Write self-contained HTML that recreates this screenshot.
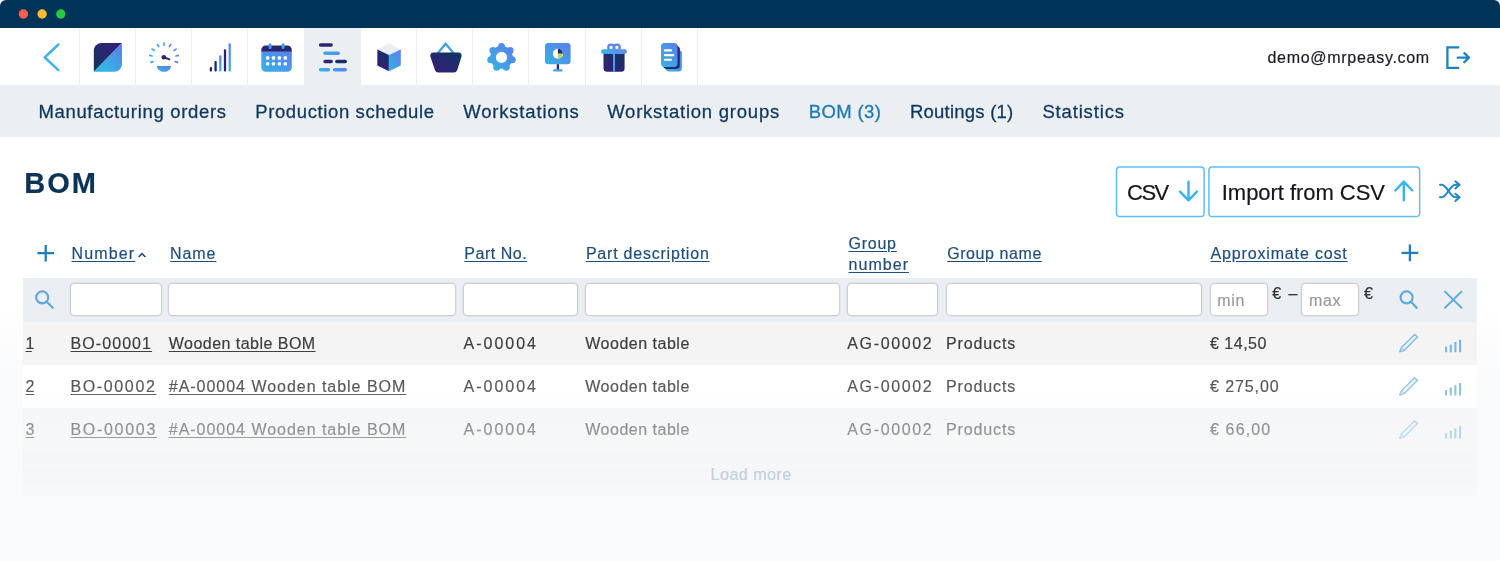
<!DOCTYPE html>
<html lang="en">
<head>
<meta charset="utf-8">
<title>BOM</title>
<style>
html,body{margin:0;padding:0;background:#fff;}
body{width:1500px;height:561px;position:relative;overflow:hidden;font-family:"Liberation Sans",Arial,sans-serif;}
.abs{position:absolute;}
.tx{position:absolute;white-space:pre;line-height:1;-webkit-text-stroke:0.2px currentColor;text-decoration-thickness:1px;text-underline-offset:1.5px;}
.titlebar{position:absolute;left:0;top:0;width:1500px;height:27.8px;background:#003358;border-radius:6px 6px 0 0;}
.dot{position:absolute;top:9.3px;width:9.4px;height:9.4px;border-radius:50%;}
.toolbar{position:absolute;left:0;top:27.8px;width:1500px;height:57.7px;background:#fff;}
.sep{position:absolute;top:27.8px;width:1px;height:57.7px;background:#ebeff4;}
.active{position:absolute;left:304px;top:27.8px;width:57px;height:57.5px;background:#eceff2;}
.subnav{position:absolute;left:0;top:85px;width:1500px;height:51.7px;background:#eceff2;}
.btn{position:absolute;top:166.3px;height:48.2px;border:1.6px solid #62bdf2;border-radius:3.5px;background:#fff;}
.filter{position:absolute;left:23px;top:277.8px;width:1453.6px;height:44.4px;background:#ebeff3;}
.inp{position:absolute;top:283px;height:31px;border:1px solid #cdcfd1;border-radius:4px;background:#fff;box-shadow:0 0 0 0.4px #d6d9db;}
.row{position:absolute;left:23px;width:1453.6px;}
.bgfade{position:absolute;left:0;top:300px;width:1500px;height:261px;
 background:linear-gradient(to bottom, rgba(249,250,252,0) 0px, rgba(249,250,252,1) 95px, rgba(248,250,252,1) 261px);}
.wrap{position:absolute;left:0;top:0;width:1500px;height:561px;
 -webkit-mask-image:linear-gradient(to bottom,#000 0px,#000 350px,rgba(0,0,0,.86) 387px,rgba(0,0,0,.55) 430px,rgba(0,0,0,.32) 470px,rgba(0,0,0,.14) 500px,transparent 525px);
 mask-image:linear-gradient(to bottom,#000 0px,#000 350px,rgba(0,0,0,.86) 387px,rgba(0,0,0,.55) 430px,rgba(0,0,0,.32) 470px,rgba(0,0,0,.14) 500px,transparent 525px);}
svg{position:absolute;overflow:visible;}
</style>
</head>
<body>
<div class="bgfade"></div>
<div class="wrap">
<div class="titlebar"></div>
<div class="toolbar"></div>
<div class="active"></div>
<div class="sep" style="left:78.8px"></div>
<div class="sep" style="left:135.0px"></div>
<div class="sep" style="left:191.2px"></div>
<div class="sep" style="left:247.4px"></div>
<div class="sep" style="left:416.0px"></div>
<div class="sep" style="left:472.2px"></div>
<div class="sep" style="left:528.4px"></div>
<div class="sep" style="left:584.6px"></div>
<div class="sep" style="left:640.8px"></div>
<div class="sep" style="left:697.0px"></div>
<div class="subnav"></div>

<!-- buttons -->

<!-- table -->
<div class="filter"></div>
<div class="row" style="top:322px;height:43.2px;background:#f4f4f5;"></div>
<div class="row" style="top:365.2px;height:43.2px;background:#ffffff;"></div>
<div class="row" style="top:408.4px;height:43.2px;background:#f4f4f5;"></div>
<div class="row" style="top:451.6px;height:45.2px;background:#f0f0f2;"></div>

<div class="inp" style="left:70.3px;width:89.4px;"></div>
<div class="inp" style="left:168.4px;width:285.5px;"></div>
<div class="inp" style="left:462.8px;width:112.9px;"></div>
<div class="inp" style="left:584.9px;width:253.0px;"></div>
<div class="inp" style="left:847.1px;width:89.4px;"></div>
<div class="inp" style="left:945.7px;width:254.0px;"></div>
<div class="inp" style="left:1209.5px;width:56.4px;"></div>
<div class="inp" style="left:1300.8px;width:56.4px;"></div>

<span class='tx' style='left:38.4px;top:102.8px;font-size:18.5px;color:#10385f;letter-spacing:0.673px;-webkit-text-stroke:0.3px;'>Manufacturing orders</span>
<span class='tx' style='left:255.2px;top:102.8px;font-size:18.5px;color:#10385f;letter-spacing:0.620px;-webkit-text-stroke:0.3px;'>Production schedule</span>
<span class='tx' style='left:463.2px;top:102.8px;font-size:18.5px;color:#10385f;letter-spacing:0.819px;-webkit-text-stroke:0.3px;'>Workstations</span>
<span class='tx' style='left:607.2px;top:102.8px;font-size:18.5px;color:#10385f;letter-spacing:0.762px;-webkit-text-stroke:0.3px;'>Workstation groups</span>
<span class='tx' style='left:808.8px;top:102.8px;font-size:18.5px;color:#2079b8;letter-spacing:0.352px;-webkit-text-stroke:0.3px;'>BOM (3)</span>
<span class='tx' style='left:910.0px;top:102.8px;font-size:18.5px;color:#10385f;letter-spacing:0.221px;-webkit-text-stroke:0.3px;'>Routings (1)</span>
<span class='tx' style='left:1042.4px;top:102.8px;font-size:18.5px;color:#10385f;letter-spacing:0.841px;-webkit-text-stroke:0.3px;'>Statistics</span>
<span class='tx' style='left:1267.5px;top:49.8px;font-size:16px;color:#1c1c28;letter-spacing:0.706px;'>demo@mrpeasy.com</span>
<span class='tx' style='left:24.3px;top:168.8px;font-size:29px;color:#0b3257;letter-spacing:1.964px;font-weight:bold;'>BOM</span>
<span class='tx' style='left:1127.1px;top:181.9px;font-size:22px;color:#15151c;letter-spacing:-1.525px;'>CSV</span>
<span class='tx' style='left:1221.8px;top:181.9px;font-size:22px;color:#15151c;letter-spacing:-0.044px;'>Import from CSV</span>
<span class='tx' style='left:71.5px;top:246.0px;font-size:16px;color:#1f4e7a;letter-spacing:1.139px;text-decoration:underline;'>Number</span>
<span class='tx' style='left:170.1px;top:246.0px;font-size:16px;color:#1f4e7a;letter-spacing:0.904px;text-decoration:underline;'>Name</span>
<span class='tx' style='left:464.3px;top:246.0px;font-size:16px;color:#1f4e7a;letter-spacing:0.530px;text-decoration:underline;'>Part No.</span>
<span class='tx' style='left:585.9px;top:246.0px;font-size:16px;color:#1f4e7a;letter-spacing:0.782px;text-decoration:underline;'>Part description</span>
<span class='tx' style='left:848.5px;top:236.4px;font-size:16px;color:#1f4e7a;letter-spacing:0.758px;text-decoration:underline;'>Group</span>
<span class='tx' style='left:848.5px;top:256.7px;font-size:16px;color:#1f4e7a;letter-spacing:1.050px;text-decoration:underline;'>number</span>
<span class='tx' style='left:947.2px;top:246.0px;font-size:16px;color:#1f4e7a;letter-spacing:0.574px;text-decoration:underline;'>Group name</span>
<span class='tx' style='left:1210.5px;top:246.0px;font-size:16px;color:#1f4e7a;letter-spacing:0.846px;text-decoration:underline;'>Approximate cost</span>
<span class='tx' style='left:1217.3px;top:292.9px;font-size:16px;color:#9a9a9a;letter-spacing:0.659px;'>min</span>
<span class='tx' style='left:1309.0px;top:292.9px;font-size:16px;color:#9a9a9a;letter-spacing:0.583px;'>max</span>
<span class='tx' style='left:1272.2px;top:285.8px;font-size:16px;color:#333;letter-spacing:1.294px;'>€</span>
<span class='tx' style='left:1288.4px;top:285.8px;font-size:16px;color:#333;letter-spacing:-1.006px;'>–</span>
<span class='tx' style='left:1363.9px;top:285.8px;font-size:16px;color:#333;letter-spacing:1.794px;'>€</span>
<span class='tx' style='left:25.6px;top:335.6px;font-size:16px;color:#3e3e3e;letter-spacing:-2.706px;text-decoration:underline;'>1</span>
<span class='tx' style='left:70.5px;top:335.6px;font-size:16px;color:#3e3e3e;letter-spacing:1.080px;text-decoration:underline;'>BO-00001</span>
<span class='tx' style='left:168.8px;top:335.6px;font-size:16px;color:#3e3e3e;letter-spacing:0.470px;text-decoration:underline;'>Wooden table BOM</span>
<span class='tx' style='left:463.5px;top:335.6px;font-size:16px;color:#3e3e3e;letter-spacing:2.000px;'>A-00004</span>
<span class='tx' style='left:585.3px;top:335.6px;font-size:16px;color:#3e3e3e;letter-spacing:0.504px;'>Wooden table</span>
<span class='tx' style='left:847.3px;top:335.6px;font-size:16px;color:#3e3e3e;letter-spacing:1.638px;'>AG-00002</span>
<span class='tx' style='left:946.0px;top:335.6px;font-size:16px;color:#3e3e3e;letter-spacing:0.880px;'>Products</span>
<span class='tx' style='left:1210.0px;top:335.6px;font-size:16px;color:#3e3e3e;letter-spacing:0.502px;'>€ 14,50</span>
<span class='tx' style='left:25.6px;top:378.8px;font-size:16px;color:#3e3e3e;letter-spacing:-0.206px;text-decoration:underline;'>2</span>
<span class='tx' style='left:70.5px;top:378.8px;font-size:16px;color:#3e3e3e;letter-spacing:1.623px;text-decoration:underline;'>BO-00002</span>
<span class='tx' style='left:168.8px;top:378.8px;font-size:16px;color:#3e3e3e;letter-spacing:0.972px;text-decoration:underline;'>#A-00004 Wooden table BOM</span>
<span class='tx' style='left:463.5px;top:378.8px;font-size:16px;color:#3e3e3e;letter-spacing:2.000px;'>A-00004</span>
<span class='tx' style='left:585.3px;top:378.8px;font-size:16px;color:#3e3e3e;letter-spacing:0.504px;'>Wooden table</span>
<span class='tx' style='left:847.3px;top:378.8px;font-size:16px;color:#3e3e3e;letter-spacing:1.638px;'>AG-00002</span>
<span class='tx' style='left:946.0px;top:378.8px;font-size:16px;color:#3e3e3e;letter-spacing:0.880px;'>Products</span>
<span class='tx' style='left:1210.0px;top:378.8px;font-size:16px;color:#3e3e3e;letter-spacing:0.917px;'>€ 275,00</span>
<span class='tx' style='left:25.6px;top:422.0px;font-size:16px;color:#3e3e3e;letter-spacing:-0.206px;text-decoration:underline;'>3</span>
<span class='tx' style='left:70.5px;top:422.0px;font-size:16px;color:#3e3e3e;letter-spacing:1.695px;text-decoration:underline;'>BO-00003</span>
<span class='tx' style='left:168.8px;top:422.0px;font-size:16px;color:#3e3e3e;letter-spacing:0.972px;text-decoration:underline;'>#A-00004 Wooden table BOM</span>
<span class='tx' style='left:463.5px;top:422.0px;font-size:16px;color:#3e3e3e;letter-spacing:2.000px;'>A-00004</span>
<span class='tx' style='left:585.3px;top:422.0px;font-size:16px;color:#3e3e3e;letter-spacing:0.504px;'>Wooden table</span>
<span class='tx' style='left:847.3px;top:422.0px;font-size:16px;color:#3e3e3e;letter-spacing:1.638px;'>AG-00002</span>
<span class='tx' style='left:946.0px;top:422.0px;font-size:16px;color:#3e3e3e;letter-spacing:0.880px;'>Products</span>
<span class='tx' style='left:1210.0px;top:422.0px;font-size:16px;color:#3e3e3e;letter-spacing:1.135px;'>€ 66,00</span>

<svg width="1500" height="561" viewBox="0 0 1500 561" style="left:0;top:0;">
<defs>
  <linearGradient id="gB" x1="0" y1="1" x2="1" y2="0"><stop offset="0" stop-color="#35b4e4"/><stop offset="1" stop-color="#5d7deb"/></linearGradient>
  <linearGradient id="gD" x1="0" y1="1" x2="1" y2="0"><stop offset="0" stop-color="#0f3560"/><stop offset="1" stop-color="#3b1d7c"/></linearGradient>
  <linearGradient id="gD2" x1="0" y1="1" x2="1" y2="0"><stop offset="0" stop-color="#3b1d7c"/><stop offset="1" stop-color="#0f3560"/></linearGradient>
  <linearGradient id="gT" x1="0" y1="0" x2="1" y2="0"><stop offset="0" stop-color="#35b4e4"/><stop offset="1" stop-color="#6a86f0"/></linearGradient>
  <linearGradient id="gGear" gradientUnits="userSpaceOnUse" x1="489" y1="70" x2="514" y2="45"><stop offset="0" stop-color="#35b4e4"/><stop offset="1" stop-color="#5d7deb"/></linearGradient>
  <linearGradient id="gV" x1="0" y1="1" x2="0" y2="0"><stop offset="0" stop-color="#3bb0e6"/><stop offset="1" stop-color="#5b82ec"/></linearGradient>
  <linearGradient id="gDu" gradientUnits="userSpaceOnUse" x1="318" y1="0" x2="348" y2="0"><stop offset="0" stop-color="#3b1d7c"/><stop offset="1" stop-color="#12305f"/></linearGradient>
  <linearGradient id="gBu" gradientUnits="userSpaceOnUse" x1="318" y1="0" x2="348" y2="0"><stop offset="0" stop-color="#38b2e5"/><stop offset="1" stop-color="#5b82ec"/></linearGradient>
  <linearGradient id="gB1" x1="0" y1="1" x2="1" y2="0"><stop offset="0.25" stop-color="#35b4e2"/><stop offset="1" stop-color="#5d7deb"/></linearGradient>
</defs>

<!-- window dots -->
<circle cx="23.4" cy="14" r="4.7" fill="#fe5c54"/>
<circle cx="42.1" cy="14" r="4.7" fill="#febc2e"/>
<circle cx="60.8" cy="14" r="4.7" fill="#28c840"/>

<!-- back chevron -->
<path d="M58.4 44.5 L44.7 57.3 L58.4 70.1" fill="none" stroke="#3fb2ee" stroke-width="2.5" stroke-linecap="round" stroke-linejoin="round"/>

<!-- icon 1: split rounded square -->
<g>
  <path d="M101.3 43.1 H122 L93.8 71.7 V50.6 A7.5 7.5 0 0 1 101.3 43.1 Z" fill="url(#gD)"/>
  <path d="M122 43.1 V64.2 A7.5 7.5 0 0 1 114.5 71.7 H93.8 Z" fill="url(#gB1)"/>
</g>

<!-- icon 2: gauge -->
<g stroke-width="1.65" stroke-linecap="round" fill="none">
  <path d="M149.77 55.42 L152.03 55.98" stroke="#3ab0e6"/>
  <path d="M150.85 62.40 L153.05 61.60" stroke="#38b2e5"/>
  <path d="M152.04 49.01 L154.36 50.59" stroke="#40a9e7"/>
  <path d="M157.44 44.48 L158.66 46.62" stroke="#489fe9"/>
  <path d="M164.00 43.00 L164.00 45.30" stroke="#5095ea"/>
  <path d="M170.64 44.47 L169.36 46.63" stroke="#568eec"/>
  <path d="M176.08 49.04 L174.02 50.56" stroke="#5c88ed"/>
  <path d="M178.23 55.42 L176.07 55.98" stroke="#6283ee"/>
  <path d="M177.55 62.40 L175.25 61.60" stroke="#6680ef"/>
</g>
<circle cx="163.8" cy="57.2" r="2.3" fill="#2a2572"/>
<path d="M163.8 57.2 L169.4 59.3" stroke="#2a2572" stroke-width="1.8" stroke-linecap="round"/>
<path d="M156.8 66 H171.1 C170.6 69.6 167.6 71.8 163.95 71.8 C160.3 71.8 157.3 69.6 156.8 66 Z" fill="url(#gB)"/>

<!-- icon 3: signal bars -->
<g>
  <rect x="209.75" y="67" width="2.3" height="4.4" rx="0.9" fill="#27246f"/>
  <rect x="214.45" y="61.1" width="2.3" height="10.3" rx="0.9" fill="#27246f"/>
  <rect x="219.15" y="55.2" width="2.3" height="16.2" rx="0.9" fill="url(#gV)"/>
  <rect x="223.85" y="49.3" width="2.3" height="22.1" rx="0.9" fill="#27246f"/>
  <rect x="228.55" y="43.2" width="2.3" height="28.2" rx="0.9" fill="url(#gV)"/>
</g>

<!-- icon 4: calendar -->
<g>
  <path d="M261.3 51 H291.8 V67.2 A4.5 4.5 0 0 1 287.3 71.7 H265.8 A4.5 4.5 0 0 1 261.3 67.2 Z" fill="url(#gB)"/>
  <path d="M265.8 45.4 H287.3 A4.5 4.5 0 0 1 291.8 49.9 V51.4 H261.3 V49.9 A4.5 4.5 0 0 1 265.8 45.4 Z" fill="url(#gD2)"/>
  <path d="M270.1 44.7 V47.4 M283.1 44.7 V47.4" stroke="#4a98ea" stroke-width="3" stroke-linecap="round"/>
  <g fill="#fff"><rect x="265.95" y="56.35" width="3.3" height="3.3" rx="1"/><rect x="271.85" y="56.35" width="3.3" height="3.3" rx="1"/><rect x="277.75" y="56.35" width="3.3" height="3.3" rx="1"/><rect x="283.65" y="56.35" width="3.3" height="3.3" rx="1"/><rect x="265.95" y="62.15" width="3.3" height="3.3" rx="1"/><rect x="271.85" y="62.15" width="3.3" height="3.3" rx="1"/><rect x="277.75" y="62.15" width="3.3" height="3.3" rx="1"/><rect x="283.65" y="62.15" width="3.3" height="3.3" rx="1"/></g>
</g>

<!-- icon 5: gantt (active) -->
<g stroke-width="3.5" stroke-linecap="round">
  <path d="M320.55 45 H331.15" stroke="url(#gDu)"/>
  <path d="M325.05 53.3 H338.15" stroke="url(#gBu)"/>
  <path d="M325.05 61.5 H331.15 M336.85 61.5 H345.25" stroke="url(#gDu)"/>
  <path d="M320.55 69.7 H328.45 M334.65 69.7 H345.25" stroke="url(#gBu)"/>
</g>

<!-- icon 6: cube -->
<g>
  <path d="M388.9 43.2 L400.8 49.5 L388.9 54.9 L377.3 49.5 Z" fill="#eaeef3"/>
  <path d="M377.3 49.5 L388.9 54.9 V71.3 L377.3 65.4 Z" fill="url(#gD2)"/>
  <path d="M400.8 49.5 L388.9 54.9 V71.3 L400.8 65.4 Z" fill="url(#gB)"/>
</g>

<!-- icon 7: basket -->
<g>
  <path d="M437.5 53.4 L445.65 43.7 L453.8 53.4" fill="none" stroke="#3f9fe8" stroke-width="2.3" stroke-linejoin="miter" stroke-linecap="round"/>
  <path d="M433.2 52.6 H458.7 A3 3 0 0 1 461.5 56.5 L457.4 69.8 A3.7 3.7 0 0 1 453.9 72.5 H438.3 A3.7 3.7 0 0 1 434.8 69.8 L430.4 56.5 A3 3 0 0 1 433.2 52.6 Z" fill="url(#gD2)"/>
</g>

<!-- icon 8: gear -->
<g fill="url(#gGear)">
  <circle cx="501.5" cy="57.4" r="11.3"/><circle cx="501.50" cy="46.40" r="3.5"/><circle cx="510.10" cy="50.54" r="3.5"/><circle cx="512.22" cy="59.85" r="3.5"/><circle cx="506.27" cy="67.31" r="3.5"/><circle cx="496.73" cy="67.31" r="3.5"/><circle cx="490.78" cy="59.85" r="3.5"/><circle cx="492.90" cy="50.54" r="3.5"/>
</g>
<circle cx="501.5" cy="57.4" r="5.6" fill="#fff"/>

<!-- icon 9: presentation -->
<g>
  <rect x="545" y="43.1" width="25.6" height="21.2" rx="3.2" fill="url(#gB)"/>
  <path d="M557.9 64.2 V70" stroke="#262a72" stroke-width="2.3"/>
  <path d="M554.2 70.3 H561.5" stroke="#46a0ea" stroke-width="2.3" stroke-linecap="round"/>
  <circle cx="557.9" cy="53.8" r="5" fill="#fff"/>
  <path d="M557.9 53.8 V48.8 A5 5 0 0 1 562.9 53.8 Z" fill="#262a72"/>
  <path d="M557.9 53.8 H562.9 A5 5 0 0 1 557.9 58.8 Z" fill="#b7dc55"/>
</g>

<!-- icon 10: gift -->
<g>
  <circle cx="611.1" cy="47.4" r="2.85" fill="none" stroke="#5b84ec" stroke-width="2.3"/>
  <circle cx="616.9" cy="47.4" r="2.85" fill="none" stroke="#5b84ec" stroke-width="2.3"/>
  <path d="M603.5 53 H624.6 V68.2 A3.5 3.5 0 0 1 621.1 71.7 H607 A3.5 3.5 0 0 1 603.5 68.2 Z" fill="url(#gD2)"/>
  <rect x="601.1" y="49.2" width="25.9" height="4.8" rx="2.4" fill="url(#gT)"/>
  <path d="M614 53.8 V71.7" stroke="#46a0ea" stroke-width="2"/>
</g>

<!-- icon 11: documents -->
<g>
  <path d="M669 47 H676.8 L681.9 52.1 V68 A3.5 3.5 0 0 1 678.4 71.5 H669.1 A3.5 3.5 0 0 1 665.6 68 Z" fill="url(#gB)"/>
  <path d="M666 44 H675.8 L679.8 48 V65.6 A3.3 3.3 0 0 1 676.5 68.9 H666.5 A3.3 3.3 0 0 1 663.2 65.6 Z" fill="url(#gD)"/>
  <rect x="661" y="43.1" width="16.5" height="23.9" rx="3.4" fill="url(#gB)"/>
  <path d="M664.9 50.4 H671 M664.9 55.1 H673.3 M664.9 59.7 H671" stroke="#fff" stroke-width="2.1" stroke-linecap="round"/>
</g>

<!-- logout -->
<g fill="none" stroke="#1c82c4" stroke-width="2.3">
  <path d="M1459.2 47.4 H1447.4 V67.8 H1459.2"/>
  <path d="M1457.7 57.7 H1468.4 M1464.3 53.2 L1469 57.7 L1464.3 62.2" stroke-linecap="round" stroke-linejoin="round"/>
</g>

<!-- buttons -->
<rect x="1116.5" y="167.1" width="87.6" height="49.5" rx="3.3" fill="none" stroke="#62bdf2" stroke-width="1.5"/>
<rect x="1208.95" y="167.1" width="210.7" height="49.5" rx="3.3" fill="none" stroke="#62bdf2" stroke-width="1.5"/>
<!-- CSV arrows -->
<g fill="none" stroke="#3db2f0" stroke-width="2.4" stroke-linecap="round" stroke-linejoin="round">
  <path d="M1188.5 181.7 V200.3 M1180 191.6 L1188.5 200.4 L1197 191.6"/>
  <path d="M1403.8 200.2 V181.8 M1395.3 190.5 L1403.8 181.7 L1412.3 190.5"/>
</g>

<!-- shuffle -->
<g fill="none" stroke="#1f86c4" stroke-width="2" stroke-linecap="round" stroke-linejoin="round">
  <path d="M1440 184.8 H1441.5 C1447.5 184.8 1449.5 197.3 1455.5 197.3 H1459.3"/>
  <path d="M1440 197.3 H1441.5 C1447.5 197.3 1449.5 184.8 1455.5 184.8 H1459.3"/>
  <path d="M1455.4 181.2 L1459.5 184.8 L1455.4 188.4"/>
  <path d="M1455.4 193.7 L1459.5 197.3 L1455.4 200.9"/>
</g>

<!-- header plus icons -->
<g stroke="#1a7fc4" stroke-width="2.3" fill="none">
  <path d="M37.4 253.2 H54 M45.7 244.9 V261.5"/>
  <path d="M1401.5 252.9 H1418.3 M1409.9 244.5 V261.3"/>
</g>
<!-- sort caret -->
<path d="M138.6 257 L142 253.6 L145.4 257" fill="none" stroke="#1f4e7a" stroke-width="1.6"/>

<!-- filter search (left) -->
<g fill="none" stroke="#5fa8d7" stroke-width="2.2">
  <circle cx="42.2" cy="297.4" r="6"/>
  <path d="M46.7 301.8 L52.8 307.8" stroke-linecap="round"/>
</g>
<!-- filter search (right) -->
<g fill="none" stroke="#5fa8d7" stroke-width="2.2">
  <circle cx="1406.6" cy="297.4" r="6"/>
  <path d="M1411.1 301.8 L1416.7 307.9" stroke-linecap="round"/>
</g>
<!-- filter clear X -->
<path d="M1445 291.6 L1461.5 307.8 M1461.5 291.6 L1445 307.8" stroke="#5fa8d7" stroke-width="1.9" stroke-linecap="round" fill="none"/>

<!-- row icons -->
<g transform="translate(0 0.0)"><g fill="#e6f1f8" stroke="#84b9de" stroke-width="1.25" stroke-linejoin="round"><path d="M1414.6 334.5 L1417.6 337 L1404.4 350.3 L1399.6 351.9 L1401.2 347.7 Z"/><path d="M1401.2 347.7 L1404.4 350.3" stroke-width="1"/></g><g stroke="#7cb5dd" stroke-width="2.1"><path d="M1446.1 346.8 V352.2 M1450.8 344.4 V352.2 M1455.4 342.1 V352.2 M1460.1 339.8 V352.2"/></g></g>
<g transform="translate(0 43.2)"><g fill="#e6f1f8" stroke="#84b9de" stroke-width="1.25" stroke-linejoin="round"><path d="M1414.6 334.5 L1417.6 337 L1404.4 350.3 L1399.6 351.9 L1401.2 347.7 Z"/><path d="M1401.2 347.7 L1404.4 350.3" stroke-width="1"/></g><g stroke="#7cb5dd" stroke-width="2.1"><path d="M1446.1 346.8 V352.2 M1450.8 344.4 V352.2 M1455.4 342.1 V352.2 M1460.1 339.8 V352.2"/></g></g>
<g transform="translate(0 86.4)"><g fill="#e6f1f8" stroke="#84b9de" stroke-width="1.25" stroke-linejoin="round"><path d="M1414.6 334.5 L1417.6 337 L1404.4 350.3 L1399.6 351.9 L1401.2 347.7 Z"/><path d="M1401.2 347.7 L1404.4 350.3" stroke-width="1"/></g><g stroke="#7cb5dd" stroke-width="2.1"><path d="M1446.1 346.8 V352.2 M1450.8 344.4 V352.2 M1455.4 342.1 V352.2 M1460.1 339.8 V352.2"/></g></g>
</svg>


</div>
<span class='tx' style='left:710.6px;top:466.7px;font-size:16px;color:#c1d0dc;letter-spacing:0.500px;-webkit-text-stroke:0.15px;'>Load more</span>
</body>
</html>
